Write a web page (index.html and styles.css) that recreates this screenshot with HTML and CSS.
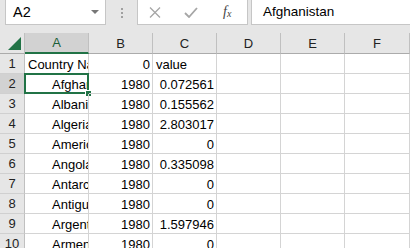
FILE: index.html
```html
<!DOCTYPE html>
<html lang="en">
<head>
  <meta charset="UTF-8">
  <title>Sheet</title>
  <link rel="stylesheet" href="styles.css">
</head>
<body>
  <div class="formula-bar">
    <div class="name-box">
      <span>A2</span>
      <span class="caret"></span>
    </div>
    <div class="grip"><i></i><i></i><i></i></div>
    <div class="fx-buttons">
      <svg width="12" height="11" viewBox="0 0 12 11"><path d="M1 0.5 L11 10.5 M11 0.5 L1 10.5" stroke="#a6a6a6" stroke-width="1.3" fill="none"/></svg>
      <svg width="14" height="11" viewBox="0 0 14 11"><path d="M1 6 L5 10 L13 1" stroke="#a6a6a6" stroke-width="1.8" fill="none"/></svg>
      <span class="fx">f<sub>x</sub></span>
    </div>
    <div class="formula-input">Afghanistan</div>
  </div>

  <div class="sheet">
    <div class="corner"><svg width="13" height="13" viewBox="0 0 13 13"><path d="M13 0 L13 13 L0 13 Z" fill="#217346"/></svg></div>
    <div class="col-head active">A</div>
    <div class="col-head">B</div>
    <div class="col-head">C</div>
    <div class="col-head">D</div>
    <div class="col-head">E</div>
    <div class="col-head">F</div>

    <div class="row-head">1</div>
    <div class="cell"><span class="text">Country Name</span></div>
    <div class="cell num"><span class="text">0</span></div>
    <div class="cell"><span class="text">value</span></div>
    <div class="cell"></div><div class="cell"></div><div class="cell"></div>

    <div class="row-head active">2</div>
    <div class="cell name"><span class="text">Afghanistan</span><span class="selection"><span class="handle"></span></span></div>
    <div class="cell num"><span class="text">1980</span></div>
    <div class="cell num"><span class="text">0.072561</span></div>
    <div class="cell"></div><div class="cell"></div><div class="cell"></div>

    <div class="row-head">3</div>
    <div class="cell name"><span class="text">Albania</span></div>
    <div class="cell num"><span class="text">1980</span></div>
    <div class="cell num"><span class="text">0.155562</span></div>
    <div class="cell"></div><div class="cell"></div><div class="cell"></div>

    <div class="row-head">4</div>
    <div class="cell name"><span class="text">Algeria</span></div>
    <div class="cell num"><span class="text">1980</span></div>
    <div class="cell num"><span class="text">2.803017</span></div>
    <div class="cell"></div><div class="cell"></div><div class="cell"></div>

    <div class="row-head">5</div>
    <div class="cell name"><span class="text">American Samoa</span></div>
    <div class="cell num"><span class="text">1980</span></div>
    <div class="cell num"><span class="text">0</span></div>
    <div class="cell"></div><div class="cell"></div><div class="cell"></div>

    <div class="row-head">6</div>
    <div class="cell name"><span class="text">Angola</span></div>
    <div class="cell num"><span class="text">1980</span></div>
    <div class="cell num"><span class="text">0.335098</span></div>
    <div class="cell"></div><div class="cell"></div><div class="cell"></div>

    <div class="row-head">7</div>
    <div class="cell name"><span class="text">Antarctica</span></div>
    <div class="cell num"><span class="text">1980</span></div>
    <div class="cell num"><span class="text">0</span></div>
    <div class="cell"></div><div class="cell"></div><div class="cell"></div>

    <div class="row-head">8</div>
    <div class="cell name"><span class="text">Antigua and Barbuda</span></div>
    <div class="cell num"><span class="text">1980</span></div>
    <div class="cell num"><span class="text">0</span></div>
    <div class="cell"></div><div class="cell"></div><div class="cell"></div>

    <div class="row-head">9</div>
    <div class="cell name"><span class="text">Argentina</span></div>
    <div class="cell num"><span class="text">1980</span></div>
    <div class="cell num"><span class="text">1.597946</span></div>
    <div class="cell"></div><div class="cell"></div><div class="cell"></div>

    <div class="row-head">10</div>
    <div class="cell name"><span class="text">Armenia</span></div>
    <div class="cell num"><span class="text">1980</span></div>
    <div class="cell num"><span class="text">0</span></div>
    <div class="cell"></div><div class="cell"></div><div class="cell"></div>
  </div>
</body>
</html>
```

FILE: styles.css
```css
body {
  margin: 0;
  width: 410px;
  height: 248px;
  overflow: hidden;
  background-color: #e6e6e6;
  font-family: "Liberation Sans", Arial, sans-serif;
  color: #000;
}
.formula-bar {
  display: flex;
  align-items: flex-start;
  height: 33px;
}
.name-box {
  display: flex;
  align-items: center;
  justify-content: space-between;
  box-sizing: border-box;
  width: 101px;
  height: 25px;
  margin-left: 5px;
  padding: 0 6px 0 7px;
  background-color: #fff;
  border: 1px solid #c6c6c6;
  border-top: none;
  font-size: 14.5px;
}
.caret {
  width: 0;
  height: 0;
  border-left: 4px solid transparent;
  border-right: 4px solid transparent;
  border-top: 4px solid #777;
}
.grip {
  display: flex;
  flex-direction: column;
  gap: 2px;
  margin: 8px 0 0 15px;
}
.grip i {
  display: block;
  width: 2px;
  height: 2px;
  background-color: #a0a0a0;
}
.fx-buttons {
  display: flex;
  align-items: center;
  box-sizing: border-box;
  width: 111px;
  height: 25px;
  margin-left: 14px;
  padding-left: 11px;
  gap: 23px;
  background-color: #fff;
  border: 1px solid #c6c6c6;
  border-top: none;
}
.fx {
  font-family: "Liberation Serif", serif;
  font-style: italic;
  font-size: 14px;
  color: #444;
  margin-left: 2px;
}
.fx sub {
  font-size: 10px;
  vertical-align: -1px;
}
.formula-input {
  flex: 1;
  box-sizing: border-box;
  height: 25px;
  margin-left: 3px;
  padding: 4px 0 0 11px;
  background-color: #fff;
  border-left: 1px solid #c6c6c6;
  border-bottom: 1px solid #c6c6c6;
  font-size: 13.5px;
}
.sheet {
  display: grid;
  grid-template-columns: 25px repeat(5, 64px) 1fr;
  grid-template-rows: 21px;
  grid-auto-rows: 20px;
  background-color: #fff;
  font-size: 13px;
}
.corner {
  display: flex;
  align-items: flex-end;
  justify-content: flex-end;
  padding: 0 3px 3px 0;
  border-right: 1px solid #c0c0c0;
  border-bottom: 1px solid #ababab;
  background-color: #e6e6e6;
}
.col-head {
  display: flex;
  align-items: center;
  justify-content: center;
  box-sizing: border-box;
  background-color: #e6e6e6;
  border-right: 1px solid #c0c0c0;
  border-bottom: 1px solid #ababab;
  color: #222;
  font-size: 13px;
}
.col-head.active {
  background-color: #d2d2d2;
  border-bottom: 2px solid #217346;
  color: #1b5e38;
}
.row-head {
  display: flex;
  align-items: center;
  justify-content: center;
  box-sizing: border-box;
  background-color: #e6e6e6;
  border-right: 1px solid #c0c0c0;
  border-bottom: 1px solid #d0d0d0;
  color: #222;
  font-size: 13px;
}
.row-head.active {
  background-color: #d2d2d2;
}
.cell {
  position: relative;
  box-sizing: border-box;
  border-right: 1px solid #d4d4d4;
  border-bottom: 1px solid #d4d4d4;
}
.cell .text {
  display: block;
  padding: 3px 2px 0 3px;
  white-space: nowrap;
  overflow: hidden;
}
.cell.num .text {
  text-align: right;
}
.cell.name .text {
  padding: 3px 0 0 27px;
}
.selection {
  position: absolute;
  left: -1px;
  top: -1px;
  right: -1px;
  bottom: -1px;
  border: 2px solid #217346;
}
.handle {
  position: absolute;
  right: -5px;
  bottom: -5px;
  width: 5px;
  height: 5px;
  background-color: #217346;
  border: 1px solid #fff;
}
```
